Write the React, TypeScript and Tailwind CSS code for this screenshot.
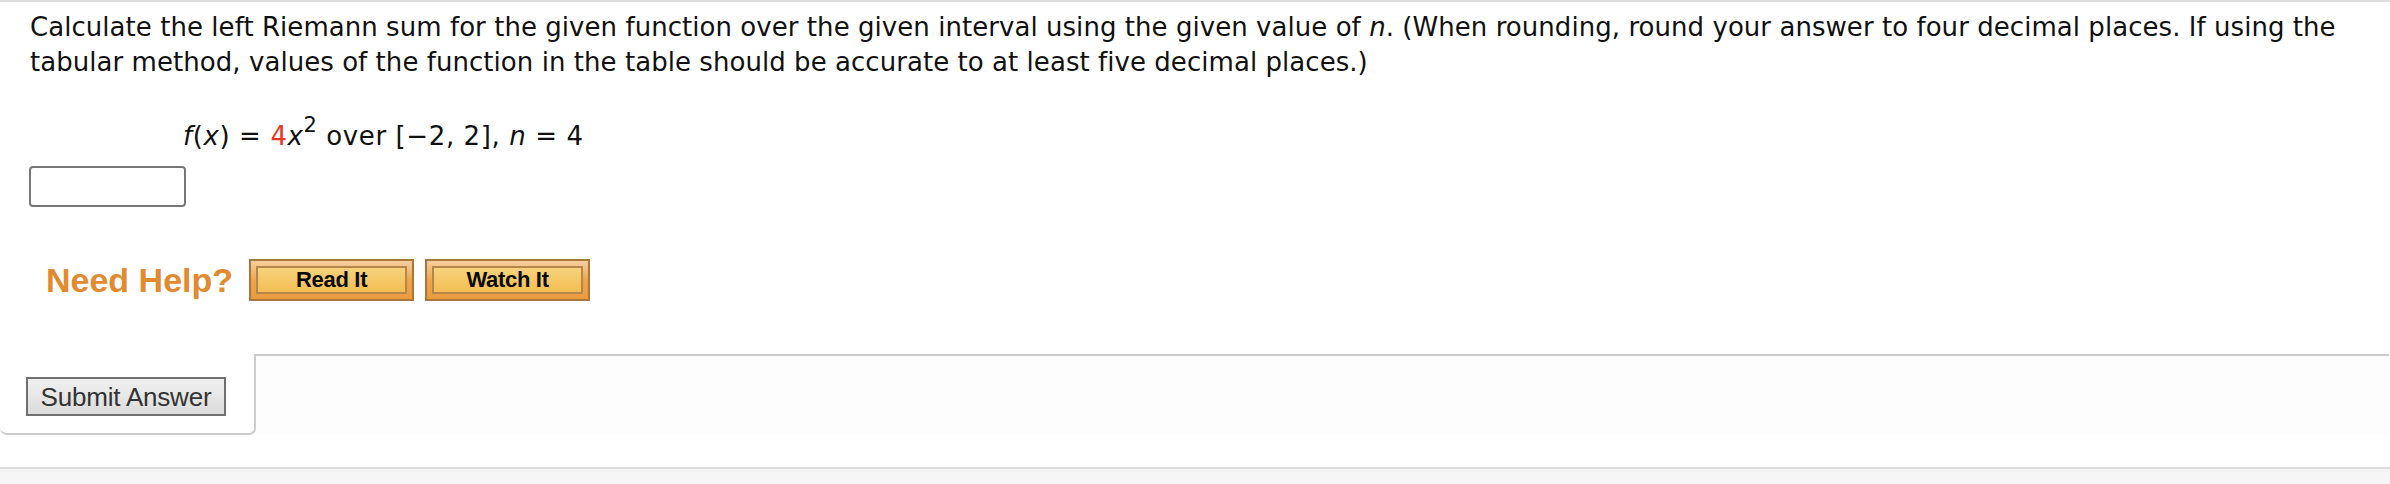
import React from "react";

function HelpButton({ label }: { label: string }) {
  return (
    <div className="w-[165px] h-[42px] border-2 border-[#a7773b] bg-gradient-to-b from-[#f7cfa0] via-[#efa44c] to-[#ec9a3e] p-[5px] box-border">
      <div className="w-full h-full border-2 border-[#b5874a] bg-gradient-to-b from-[#f7d27c] to-[#f3bd52] flex items-center justify-center box-border">
        <span className="font-['Liberation_Sans',Arial,sans-serif] font-bold text-[22px] leading-none text-[#0a0a0a] tracking-[-0.3px]">
          {label}
        </span>
      </div>
    </div>
  );
}

export default function App() {
  return (
    <div className="w-[2390px] h-[484px] bg-white flex flex-col overflow-hidden">
      <div className="border-t-2 border-[#dddddd]" />
      <div className="pl-[30px] pr-[20px] pt-[8px] font-['DejaVu_Sans',Verdana,sans-serif] text-[26px] leading-[35px] text-[#111]">
        <p className="whitespace-nowrap tracking-[0.05px]">
          Calculate the left Riemann sum for the given function over the given interval using the given value of{" "}
          <i>n</i>. (When rounding, round your answer to four decimal places. If using the
          <br />
          tabular method, values of the function in the table should be accurate to at least five decimal places.)
        </p>
        <div className="mt-[39px] pl-[153px] whitespace-nowrap tracking-[0.6px]">
          <i>f</i>(<i>x</i>) = <span className="text-[#e3392a]">4</span>
          <i>x</i>
          <sup className="text-[21px] top-[-0.6em]">2</sup> over [−2, 2], <i>n</i> = 4
        </div>
      </div>
      <div className="pl-[29px] mt-[12px]">
        <div className="w-[157px] h-[41px] border-2 border-[#777777] rounded-[4px] bg-white" />
      </div>
      <div className="flex items-center pl-[46px] mt-[52px] h-[42px]">
        <span className="font-['Liberation_Sans',Arial,sans-serif] font-bold text-[34px] leading-none text-[#e28a2f] mr-[16px]">
          Need Help?
        </span>
        <div className="flex gap-[11px]">
          <HelpButton label="Read It" />
          <HelpButton label="Watch It" />
        </div>
      </div>
      <div className="flex mt-[53px] pr-[1px]">
        <div className="w-[256px] h-[81px] border-r-2 border-b-2 border-[#cccccc] rounded-b-[7px] pl-[26px] pt-[23px] box-border">
          <button className="w-[200px] h-[39px] border-2 border-[#707070] bg-gradient-to-b from-[#f0f0f0] to-[#dcdcdc] font-['Liberation_Sans',Arial,sans-serif] text-[26px] leading-none text-[#333] tracking-[-0.2px] flex items-center justify-center">
            Submit Answer
          </button>
        </div>
        <div className="flex-1 h-[81px] border-t-2 border-[#cccccc] bg-[#fdfdfd]" />
      </div>
      <div className="mt-[32px] border-t-2 border-[#dddddd] flex-1 bg-[#f6f6f6]" />
    </div>
  );
}
